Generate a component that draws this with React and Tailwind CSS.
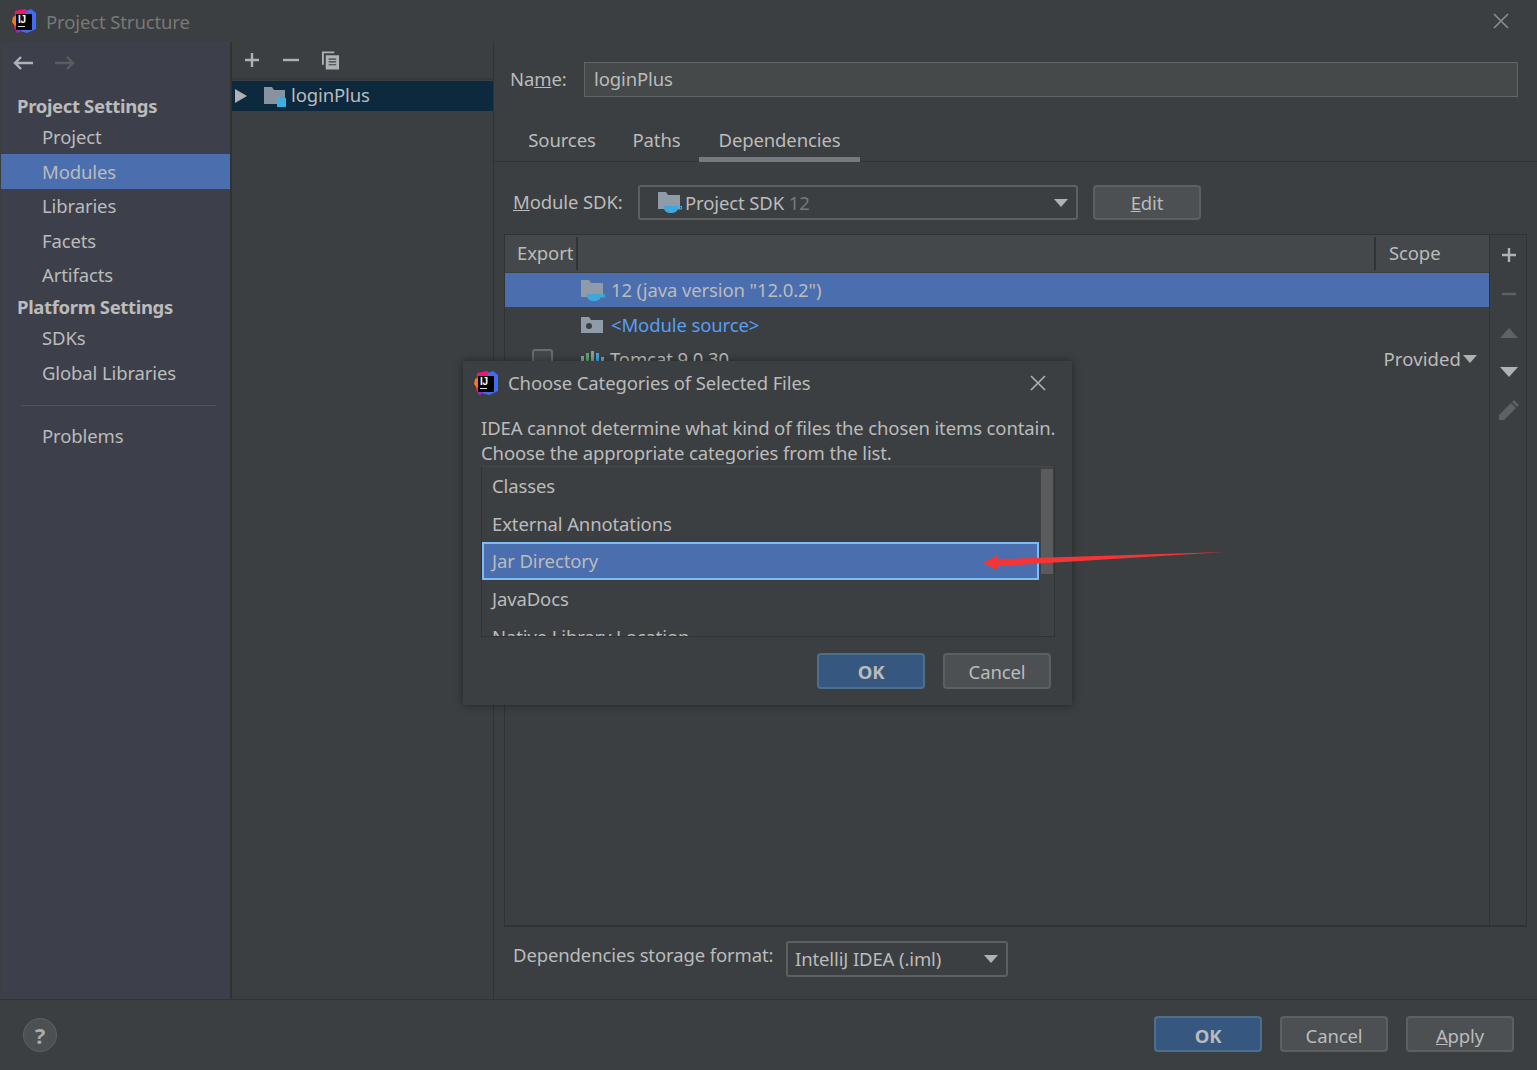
import React from "react";

function Logo({ className = "" }) {
  return (
    <div className={"relative w-[24px] h-[24px] shrink-0 " + className}>
      <svg width="24" height="24" viewBox="0 0 24 24" className="absolute left-0 top-0">
        <path d="M3 2 L13 0 L17 4 L6 24 L2 19 Z" fill="#f0147a" />
        <path d="M1 8 L5 6 L7 15 L3 17 L0 13 Z" fill="#f97a12" />
        <path d="M14 2 L19 0 L24 4 L24 20 L15 24 L8 22 L14 12 Z" fill="#3f6cf0" />
        <path d="M3 17 L9 22 L5 24 Z" fill="#8a32d0" />
        <rect x="4" y="5" width="16" height="16" fill="#000" />
        <rect x="6" y="17" width="7" height="1" fill="#ddd" />
      </svg>
      <span className="absolute left-[6px] top-[5px] text-[10px] leading-[11px] tracking-[-0.3px] font-bold text-white font-['Liberation_Sans',sans-serif]">IJ</span>
    </div>
  );
}

function FolderCup() {
  return (
    <svg width="24" height="21" viewBox="0 0 24 21" className="shrink-0">
      <path d="M0 0 H8 L10 3 H22 V17 H0 Z" fill="#8f9ba6" />
      <path d="M6 14 H20 V16 C20 19 17 21 13 21 C9 21 6 19 6 16 Z" fill="#3ea8dc" />
      <path d="M20 14.5 H23.5 V17 H19.5" fill="none" stroke="#3ea8dc" strokeWidth="1.2" />
    </svg>
  );
}

function Btn({ children, primary, className = "" }) {
  return (
    <div
      className={
        "flex items-center justify-center w-[108px] h-[36px] rounded-[4px] border-2 " +
        (primary ? "bg-[#365880] border-[#4c708c] font-bold " : "bg-[#4c5052] border-[#5e6060] ") +
        className
      }
    >
      {children}
    </div>
  );
}

function NavItem({ children, h, active, extra = "" }) {
  return (
    <div className={"flex items-center pl-[41px] " + h + " " + extra + (active ? " bg-[#4b6eaf]" : "")}>{children}</div>
  );
}

function NavHead({ children, h }) {
  return <div className={"flex items-center pl-[16px] font-bold tracking-[-0.35px] " + h}>{children}</div>;
}

function Caret() {
  return (
    <svg width="14" height="8" viewBox="0 0 14 8" className="shrink-0">
      <path d="M0 0 H14 L7 8 Z" fill="#afb1b3" />
    </svg>
  );
}

export default function App() {
  return (
    <div className="relative w-[1537px] h-[1070px] overflow-hidden flex flex-col bg-[#3c3f41] text-[#bbbbbb] text-[18.5px] tracking-[-0.12px] font-['Noto_Sans',sans-serif]">
      {/* Title bar */}
      <div className="h-[42px] flex items-center pl-[12px] pr-[27px] shrink-0">
        <Logo />
        <span className="ml-[10px] pt-[1px] text-[#787878]">Project Structure</span>
        <svg width="18" height="18" viewBox="0 0 18 18" className="ml-auto">
          <path d="M2 2 L16 16 M16 2 L2 16" stroke="#8a8c8e" strokeWidth="1.6" />
        </svg>
      </div>

      <div className="flex-1 flex min-h-0">
        {/* Sidebar */}
        <aside className="w-[229px] ml-[1px] shrink-0 bg-[#3d404a] flex flex-col">
          <div className="h-[48px] flex items-center pl-[11px] pb-[7px] gap-[20px]">
            <svg width="22" height="16" viewBox="0 0 22 16">
              <path d="M21 8 H3 M9 2 L3 8 L9 14" fill="none" stroke="#afb1b3" strokeWidth="2.4" />
            </svg>
            <svg width="22" height="16" viewBox="0 0 22 16">
              <path d="M1 8 H19 M13 2 L19 8 L13 14" fill="none" stroke="#5a5d5f" strokeWidth="2.4" />
            </svg>
          </div>
          <NavHead h="h-[32px]">Project Settings</NavHead>
          <NavItem h="h-[32px]" extra="pb-[2px]">Project</NavItem>
          <NavItem h="h-[35px]" active extra="pt-[1px]">Modules</NavItem>
          <NavItem h="h-[34px]">Libraries</NavItem>
          <NavItem h="h-[36px]">Facets</NavItem>
          <NavItem h="h-[33px]" extra="pb-[2px]">Artifacts</NavItem>
          <NavHead h="h-[30px]">Platform Settings</NavHead>
          <NavItem h="h-[33px]" extra="pb-[2px]">SDKs</NavItem>
          <NavItem h="h-[36px]">Global Libraries</NavItem>
          <div className="mt-[14px] ml-[20px] mr-[14px] h-px bg-[#50535a]" />
          <NavItem h="h-[61px]" extra="pb-[2px]">Problems</NavItem>
        </aside>

        {/* Modules tree */}
        <section className="w-[264px] shrink-0 border-l-2 border-r border-[#323232] flex flex-col">
          <div className="h-[38px] flex items-center pl-[11px] border-b-2 border-[#353739] gap-[21px]">
            <svg width="18" height="18" viewBox="0 0 18 18">
              <path d="M9 2 V16 M2 9 H16" stroke="#afb1b3" strokeWidth="2.4" />
            </svg>
            <svg width="18" height="18" viewBox="0 0 18 18">
              <path d="M1 9 H17" stroke="#afb1b3" strokeWidth="2.4" />
            </svg>
            <svg width="19" height="20" viewBox="0 0 20 20">
              <path d="M1 1 H14 V3 H3 V15 H1 Z" fill="#afb1b3" />
              <path d="M5 5 H19 V20 H5 Z" fill="#afb1b3" />
              <path d="M8 9 H16 M8 12 H16 M8 15 H16" stroke="#3c3f41" strokeWidth="1.3" />
            </svg>
          </div>
          <div className="mt-[1px] h-[30px] bg-[#0d293e] flex items-center pl-[3px]">
            <svg width="13" height="14" viewBox="0 0 13 14" className="shrink-0">
              <path d="M0 0 L12 7 L0 14 Z" fill="#afb1b3" />
            </svg>
            <div className="relative ml-[15px] w-[24px] h-[22px] shrink-0">
              <svg width="24" height="22" viewBox="0 0 24 22">
                <path d="M1 2 H9 L11 5 H22 V19 H1 Z" fill="#87939e" />
                <rect x="14" y="13" width="9" height="9" fill="#3cb0e4" />
              </svg>
            </div>
            <span className="ml-[4px] pb-[3px]">loginPlus</span>
          </div>
        </section>

        {/* Details */}
        <main className="flex-1 min-w-0 flex flex-col">
          <div className="mt-[20px] h-[35px] flex items-center pl-[16px] pr-[19px] shrink-0">
            <span className="w-[74px] shrink-0 pb-[2px]">Na<span className="underline">m</span>e:</span>
            <div className="flex-1 h-full bg-[#45494a] border border-[#646464] flex items-center pl-[9px] pb-[2px]">loginPlus</div>
          </div>

          <div className="mt-[23px] h-[42px] flex pl-[16px] border-b border-[#323232] shrink-0">
            <div className="w-[104px] flex items-center justify-center pb-[2px]">Sources</div>
            <div className="w-[85px] flex items-center justify-center pb-[2px]">Paths</div>
            <div className="w-[161px] flex items-center justify-center pt-[3px] border-b-[5px] border-[#747a80] mb-[-1px]">Dependencies</div>
          </div>

          <div className="mt-[23px] h-[35px] flex items-center pl-[19px] shrink-0">
            <span className="w-[125px] shrink-0 pb-[2px]"><span className="underline">M</span>odule SDK:</span>
            <div className="w-[440px] h-full bg-[#3c3f41] border-2 border-[#5e6060] rounded-[3px] flex items-center pl-[18px] pr-[8px]">
              <FolderCup />
              <span className="ml-[3px] pt-[1px]">Project SDK <span className="text-[#787878]">12</span></span>
              <span className="ml-auto"><Caret /></span>
            </div>
            <div className="ml-[15px] w-[108px] h-full bg-[#4c5052] border-2 border-[#5e6060] rounded-[4px] flex items-center justify-center pt-[1px]">
              <span><span className="underline">E</span>dit</span>
            </div>
          </div>

          {/* Table */}
          <div className="mt-[14px] ml-[10px] mr-[10px] h-[693px] shrink-0 flex border-t border-b-2 border-l border-r border-[#323232]">
            <div className="flex-1 min-w-0 flex flex-col">
              <div className="h-[37px] bg-[#45484a] flex items-stretch">
                <div className="w-[73px] flex items-center pl-[12px] pb-[2px] border-r-2 border-[#323232] my-[2px]">Export</div>
                <div className="flex-1 border-r-2 border-[#323232] my-[2px]" />
                <div className="w-[113px] flex items-center pl-[13px] pb-[2px]">Scope</div>
              </div>
              <div className="mt-[1px] h-[34px] bg-[#4b6eaf] flex items-center pl-[76px]">
                <FolderCup />
                <span className="ml-[6px]">12 (java version "12.0.2")</span>
              </div>
              <div className="h-[36px] flex items-center pl-[76px]">
                <svg width="24" height="18" viewBox="0 0 24 18" className="shrink-0">
                  <path d="M0 1 H8 L10 4 H22 V17 H0 Z" fill="#8f9ba6" />
                  <circle cx="8" cy="10" r="3" fill="#3c3f41" />
                </svg>
                <span className="ml-[6px] text-[#589df6]">&lt;Module source&gt;</span>
              </div>
              <div className="h-[34px] flex items-center pl-[27px] pr-[12px] pb-[2px]">
                <div className="w-[21px] h-[21px] rounded-[3px] border-2 border-[#6b6b6b] bg-[#43494a] shrink-0" />
                <svg width="24" height="16" viewBox="0 0 24 16" className="ml-[28px] shrink-0">
                  <rect x="0" y="5" width="3" height="11" fill="#8f9ba6" />
                  <rect x="5" y="2" width="3" height="14" fill="#59a869" />
                  <rect x="10" y="0" width="3" height="16" fill="#8f9ba6" />
                  <rect x="15" y="2" width="3" height="14" fill="#3ea8dc" />
                  <rect x="20" y="6" width="3" height="10" fill="#8f9ba6" />
                </svg>
                <span className="ml-[5px]">Tomcat 9.0.30</span>
                <span className="ml-auto flex items-center gap-[2px]"><span className="tracking-[0.1px]">Provided</span><Caret /></span>
              </div>
            </div>
            <div className="w-[37px] shrink-0 border-l border-[#323232] flex flex-col items-center pt-[11px] pl-[1px]">
              <svg width="18" height="18" viewBox="0 0 18 18">
                <path d="M9 2 V16 M2 9 H16" stroke="#afb1b3" strokeWidth="2.4" />
              </svg>
              <svg width="18" height="18" viewBox="0 0 18 18" className="mt-[21px]">
                <path d="M2 9 H16" stroke="#5f6264" strokeWidth="2.4" />
              </svg>
              <svg width="18" height="10" viewBox="0 0 18 10" className="mt-[25px]">
                <path d="M9 0 L18 10 H0 Z" fill="#5f6264" />
              </svg>
              <svg width="18" height="10" viewBox="0 0 18 10" className="mt-[29px]">
                <path d="M0 0 H18 L9 10 Z" fill="#afb1b3" />
              </svg>
              <svg width="20" height="20" viewBox="0 0 20 20" className="mt-[23px]">
                <path d="M0 20 V15 L12 3 L17 8 L5 20 Z M13 2 L15 0 L20 5 L18 7 Z" fill="#5f6264" />
              </svg>
            </div>
          </div>

          <div className="mt-[14px] flex items-start pl-[19px] shrink-0">
            <span className="w-[273px] shrink-0 leading-[27px]">Dependencies storage format:</span>
            <div className="w-[222px] h-[36px] border-2 border-[#5e6060] rounded-[3px] flex items-center pl-[7px] pr-[8px]">
              <span>IntelliJ IDEA (.iml)</span>
              <span className="ml-auto"><Caret /></span>
            </div>
          </div>
        </main>
      </div>

      {/* Footer */}
      <div className="h-[71px] shrink-0 border-t border-[#323232] flex items-center pl-[23px] pr-[23px] pb-[2px]">
        <div className="w-[34px] h-[34px] mt-[2px] rounded-full bg-[#4c5052] border border-[#5e6060] flex items-center justify-center font-bold text-[22px] text-[#a9abad]">?</div>
        <div className="ml-auto flex gap-[18px]">
          <Btn primary className="pt-[3px]">OK</Btn>
          <Btn className="pt-[3px]">Cancel</Btn>
          <Btn className="pt-[3px]"><span><span className="underline">A</span>pply</span></Btn>
        </div>
      </div>

      {/* Dialog */}
      <div className="absolute left-[463px] top-[361px] w-[609px] h-[344px] bg-[#3c3f41] shadow-[0_0_8px_rgba(0,0,0,0.45)] flex flex-col">
        <div className="h-[44px] flex items-center pl-[11px] pr-[25px] shrink-0">
          <Logo />
          <span className="ml-[10px]">Choose Categories of Selected Files</span>
          <svg width="18" height="18" viewBox="0 0 18 18" className="ml-auto">
            <path d="M2 2 L16 16 M16 2 L2 16" stroke="#afb1b3" strokeWidth="1.6" />
          </svg>
        </div>
        <div className="mt-[10px] pl-[18px] leading-[25px] whitespace-nowrap">
          <div>IDEA cannot determine what kind of files the chosen items contain.</div>
          <div>Choose the appropriate categories from the list.</div>
        </div>
        <div className="mt-[1px] ml-[18px] w-[574px] h-[171px] shrink-0 border border-[#323232] border-t-[#45484a] relative overflow-hidden">
          <div className="flex flex-col pr-[15px]">
            <div className="h-[38px] flex items-center pl-[10px]">Classes</div>
            <div className="h-[37px] flex items-center pl-[10px]">External Annotations</div>
            <div className="h-[38px] flex items-center pl-[8px] bg-[#4b6eaf] border-2 border-[#7ebcf5]">Jar Directory</div>
            <div className="h-[38px] flex items-center pl-[10px]">JavaDocs</div>
            <div className="h-[38px] flex items-center pl-[10px]">Native Library Location</div>
          </div>
          <div className="absolute right-0 top-0 bottom-0 w-[14px] bg-[#3f4244]">
            <div className="mt-[2px] ml-[1px] w-[12px] h-[105px] bg-[#595b5d]" />
          </div>
        </div>
        <div className="mt-[16px] flex justify-end pr-[21px] gap-[18px]">
          <Btn primary className="pt-[1px]">OK</Btn>
          <Btn className="pt-[1px]">Cancel</Btn>
        </div>
      </div>

      {/* Annotation arrow */}
      <svg width="250" height="28" viewBox="0 0 250 28" className="absolute left-[980px] top-[545px]">
        <path d="M245 7 L18 14 L18 10 L3 17.7 L18 25.7 L18 21 Z" fill="#f53535" />
      </svg>
    </div>
  );
}
